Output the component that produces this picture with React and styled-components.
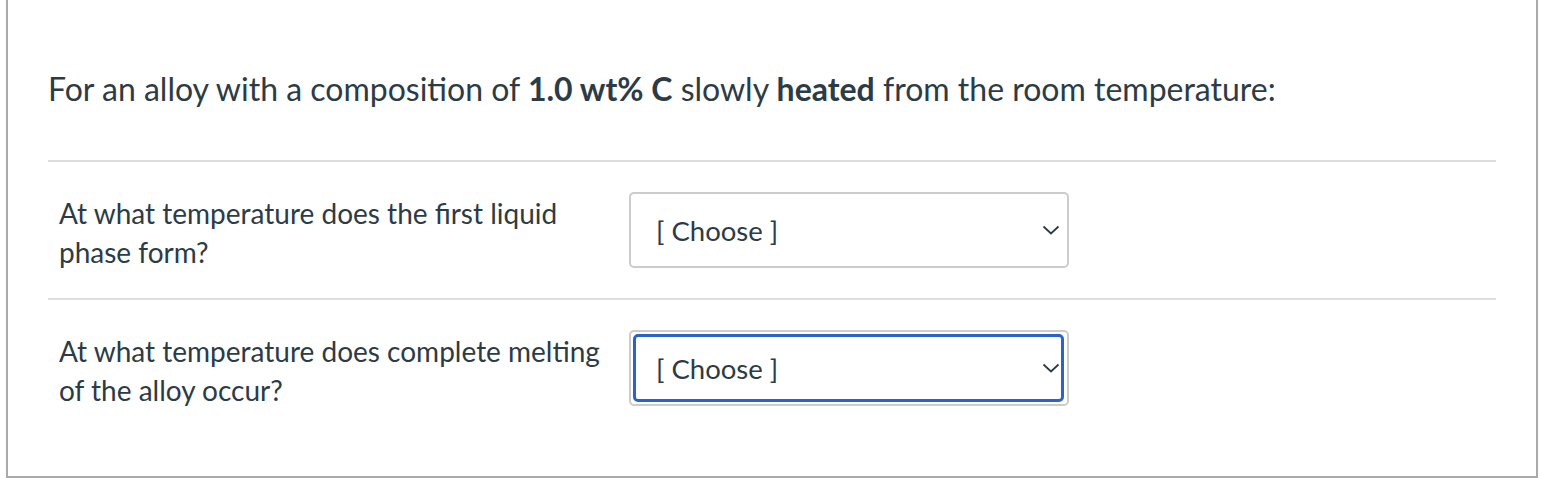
import React from "react";
import styled, { createGlobalStyle } from "styled-components";

const Global = createGlobalStyle`
  html, body { margin: 0; padding: 0; background: #ffffff; }
  body { font-family: Lato, "Noto Sans", "Liberation Sans", sans-serif; color: #2d3b45; }
  * { box-sizing: border-box; }
`;

const Page = styled.div`
  height: 478px;
  padding-left: 6px;
  width: 1538px;
`;

const Panel = styled.div`
  height: 478px;
  border: 2px solid #aaaaaa;
  border-top: none;
  padding: 0 40px 0 40px;
`;

const Intro = styled.p`
  margin: 0;
  padding-top: 67px;
  padding-bottom: 49px;
  font-size: 32px;
  line-height: 44px;
  font-weight: 400;
`;

const Row = styled.div`
  display: flex;
  align-items: flex-start;
  border-top: 2px solid #dddddd;
  padding: 30px 0 26px 11px;
`;

const Question = styled.div`
  width: 558px;
  margin-right: 12px;
  margin-top: 2px;
  font-size: 28px;
  line-height: 39px;
`;

const SelectBox = styled.div`
  position: relative;
  display: flex;
  align-items: center;
  justify-content: space-between;
  width: 440px;
  height: 76px;
  border: 2px solid #cccccc;
  border-radius: 5px;
  padding: 0 7px 0 25px;
  font-size: 27.5px;
  color: #2d3b45;
  background: #ffffff;

  ${(p) =>
    p.$focused &&
    `
    &::after {
      content: "";
      position: absolute;
      top: 2px;
      left: 2px;
      right: 3px;
      bottom: 2px;
      border: 3px solid #2b63c8;
      border-radius: 5px;
      pointer-events: none;
    }
  `}
`;

const Chevron = styled.svg`
  width: 18px;
  height: 10px;
  flex: none;
  position: relative;
  z-index: 1;
`;

function Select({ focused }) {
  return (
    <SelectBox $focused={focused}>
      <span>[ Choose ]</span>
      <Chevron viewBox="0 0 18 10">
        <path d="M1.5 1.5 L9 8.5 L16.5 1.5" fill="none" stroke="#2d3b45" strokeWidth="1.8" />
      </Chevron>
    </SelectBox>
  );
}

export default function App() {
  return (
    <Page>
      <Global />
      <Panel>
        <Intro>
          For an alloy with a composition of <strong>1.0 wt% C</strong> slowly{" "}
          <strong>heated</strong> from the room temperature:
        </Intro>
        <Row>
          <Question>At what temperature does the first liquid phase form?</Question>
          <Select />
        </Row>
        <Row>
          <Question>At what temperature does complete melting of the alloy occur?</Question>
          <Select focused />
        </Row>
      </Panel>
    </Page>
  );
}
